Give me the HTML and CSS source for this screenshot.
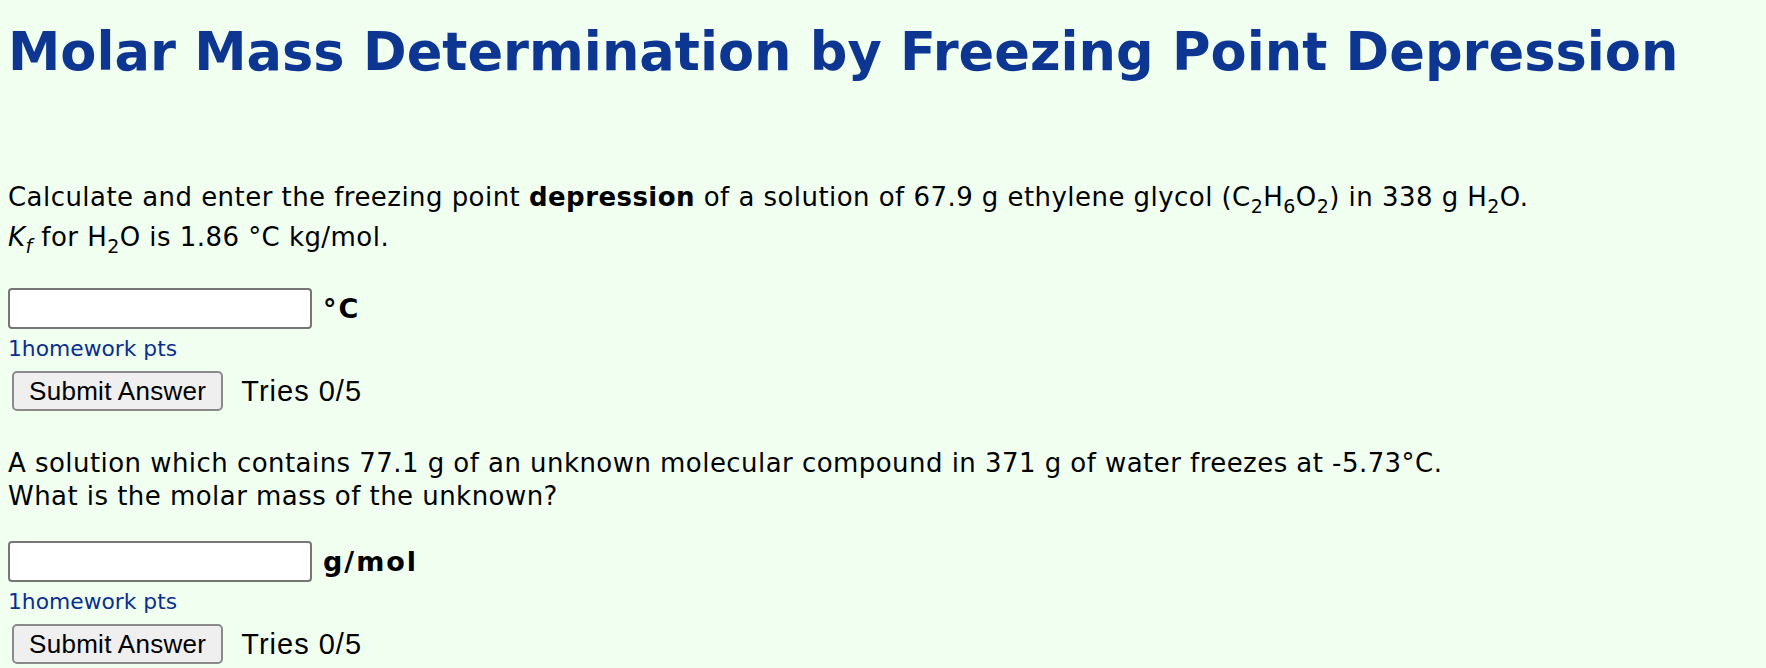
FILE: index.html
```html
<!DOCTYPE html>
<html lang="en">
<head>
<meta charset="UTF-8">
<meta name="viewport" content="width=device-width, initial-scale=1.0">
<title>Molar Mass Determination by Freezing Point Depression</title>
<link rel="stylesheet" href="styles.css">
</head>
<body>

<h1 class="title">Molar Mass Determination by Freezing Point Depression</h1>

<form class="problem" onsubmit="return false">
  <p class="question has-formula">
    Calculate and enter the freezing point <b>depression</b> of a solution of 67.9 g ethylene glycol (C<sub>2</sub>H<sub>6</sub>O<sub>2</sub>) in 338 g H<sub>2</sub>O.<br>
    <i>K<sub>f</sub></i> for H<sub>2</sub>O is 1.86 °C kg/mol.
  </p>
  <div class="answer-row">
    <input type="text" class="answer" name="dt">
    <span class="unit">°C</span>
  </div>
  <div class="pts">1homework pts</div>
  <div class="submit-row">
    <button type="submit" class="submit">Submit Answer</button>
    <span class="tries">Tries 0/5</span>
  </div>
</form>

<form class="problem" onsubmit="return false">
  <p class="question">
    A solution which contains 77.1 g of an unknown molecular compound in 371 g of water freezes at -5.73°C.<br>
    What is the molar mass of the unknown?
  </p>
  <div class="answer-row">
    <input type="text" class="answer" name="mm">
    <span class="unit">g/mol</span>
  </div>
  <div class="pts">1homework pts</div>
  <div class="submit-row">
    <button type="submit" class="submit">Submit Answer</button>
    <span class="tries">Tries 0/5</span>
  </div>
</form>

</body>
</html>
```

FILE: styles.css
```css
body {
  font-family: Verdana, "DejaVu Sans", sans-serif;
  font-size: 26px;
  letter-spacing: 0.45px;
  background-color: #f0fff0;
  color: #000;
  margin: 8px;
}
.title {
  font-size: 52.6px;
  line-height: 56px;
  letter-spacing: 0;
  color: #0d3692;
  margin: 16px 0 0;
}
.problem {
  margin: 0;
}
.question {
  margin: 97px 0 28px;
  line-height: 40px;
}
.problem + .problem .question {
  margin-top: 36px;
  line-height: 33px;
}
.has-formula {
  padding-bottom: 3px;
}
sub {
  font-size: 19px;
  line-height: 0;
  vertical-align: -7px;
}
.answer-row {
  display: flex;
  align-items: center;
}
.answer {
  width: 304px;
  height: 41px;
  box-sizing: border-box;
  border: 2px solid #767676;
  border-radius: 4px;
  background: #fff;
  font-size: 21px;
  padding: 2px 4px;
  margin: 0;
}
.unit {
  font-size: 27px;
  font-weight: bold;
  line-height: 41px;
  letter-spacing: 2px;
  margin-left: 11px;
}
.pts {
  font-size: 21.8px;
  line-height: 26px;
  letter-spacing: 0;
  color: #0b2f8e;
  margin-top: 7px;
}
.submit-row {
  display: flex;
  align-items: center;
  margin-top: 9px;
}
.submit {
  font-family: "Liberation Sans", Arial, sans-serif;
  font-size: 26px;
  letter-spacing: 0.3px;
  height: 40px;
  padding: 0 15px;
  margin-left: 4px;
  background-color: #efefef;
  border: 2px solid #8a8a8a;
  border-radius: 5px;
  color: #000;
}
.tries {
  font-family: "Liberation Sans", Arial, sans-serif;
  font-size: 29px;
  letter-spacing: 1px;
  line-height: 40px;
  margin-left: 18px;
}
```
